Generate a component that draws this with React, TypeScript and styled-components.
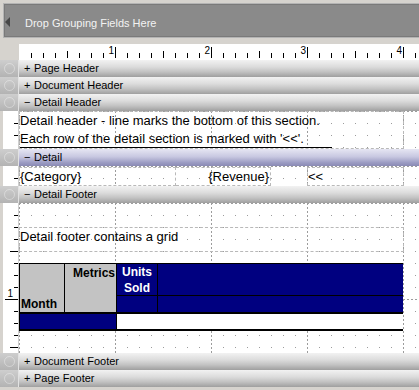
import React from "react"
import styled, { createGlobalStyle } from "styled-components"

const PAGE_GREY = "#d6d3ce"
const FONT = `"Liberation Sans", Arial, sans-serif`

const GlobalStyle = createGlobalStyle`
	html, body {
		margin: 0;
		padding: 0;
		background: ${PAGE_GREY};
	}
	body {
		font-family: ${FONT};
	}
`

type Tone = "grey" | "blue"

const BANDS: Record<Tone, string> = {
	grey: "linear-gradient(#f2f2f2, #dcdcdc 40%, #c2c2c2 70%, #9f9f9f)",
	blue: "linear-gradient(#e6e6f3, #c8c8e1 45%, #9c9cc3 80%, #8a8ab4)",
}

// horizontal ruler, 12px per 1/8 inch
const TopRuler = () => {
	const ticks = []
	for (let k = 1; k <= 33; k++) {
		const x = k * 12 + 0.5
		const top = k % 8 === 0 ? 3 : k % 4 === 0 ? 7 : 9
		ticks.push(<line key={k} x1={x} x2={x} y1={top} y2={14} stroke="#000" />)
		if (k % 8 === 0) {
			ticks.push(
				<text key={"n" + k} x={k * 12 - 1} y={10} fontSize={10} textAnchor="end" fontFamily={FONT}>
					{k / 8}
				</text>
			)
		}
	}
	return (
		<RulerStrip width={400} height={16} shapeRendering="crispEdges">
			{ticks}
		</RulerStrip>
	)
}

const SideRuler = ({ height }: { height: number }) => {
	const ticks = []
	for (let k = 1; k * 12 < height - 2; k++) {
		const y = k * 12 + 0.5
		const left = k % 8 === 0 ? 2 : k % 4 === 0 ? 7 : 11
		ticks.push(<line key={k} x1={left} x2={15} y1={y} y2={y} stroke="#000" />)
		if (k % 8 === 0) {
			ticks.push(
				<text key={"n" + k} x={10} y={y - 3} fontSize={10} textAnchor="end" fontFamily={FONT}>
					{k / 8}
				</text>
			)
		}
	}
	return (
		<VRuler width={15} height={height} shapeRendering="crispEdges">
			{ticks}
		</VRuler>
	)
}

const SectionBand = ({ label, open, tone = "grey" }: { label: string; open?: boolean; tone?: Tone }) => (
	<Band>
		<BandCap />
		<BandBar $tone={tone}>
			<Toggle>{open ? "−" : "+"}</Toggle>
			{label}
		</BandBar>
	</Band>
)

const App = () => {
	return (
		<Designer>
			<GlobalStyle />
			<GroupPanel>
				<GroupBox>
					<CollapseArrow />
					<GroupText>Drop Grouping Fields Here</GroupText>
				</GroupBox>
			</GroupPanel>

			<RulerRow>
				<TopRuler />
			</RulerRow>

			<SectionBand label="Page Header" />
			<SectionBand label="Document Header" />
			<SectionBand label="Detail Header" open />

			<Section $h={38}>
				<SideRuler height={38} />
				<Surface>
					<Field $w={385} $h={38}>
						<Line $lh={18}>Detail header - line marks the bottom of this section.</Line>
						<Line $lh={17}>Each row of the detail section is marked with '&lt;&lt;'.</Line>
						<Rule />
					</Field>
				</Surface>
			</Section>

			<SectionBand label="Detail" open tone="blue" />

			<Section $h={20}>
				<SideRuler height={20} />
				<Surface>
					<FieldRow>
						<Field $w={157} $h={19}>
							<Line $lh={17}>{"{Category}"}</Line>
						</Field>
						<Field $w={95} $h={19} $align="right" $noLeft>
							<Line $lh={17}>{"{Revenue}"}</Line>
						</Field>
						<Spacer />
						<Field $w={97} $h={19}>
							<Line $lh={17}>&lt;&lt;</Line>
						</Field>
					</FieldRow>
				</Surface>
			</Section>

			<SectionBand label="Detail Footer" open />

			<Section $h={150}>
				<SideRuler height={150} />
				<Surface>
					<FooterBody>
						<Field $w={385} $h={25}>
							<Line $lh={18}>Detail footer contains a grid</Line>
						</Field>
						<Grid>
							<HeadCell $span $bottom>
								Month
							</HeadCell>
							<HeadCell $span $right>
								Metrics
							</HeadCell>
							<BlueCell $center>
								Units
								<br />
								Sold
							</BlueCell>
							<BlueCell />
							<BlueCell />
							<BlueCell />
							<TotalCell $blue />
							<TotalCell />
						</Grid>
					</FooterBody>
				</Surface>
			</Section>

			<SectionBand label="Document Footer" />
			<SectionBand label="Page Footer" />
		</Designer>
	)
}

export default App

const Designer = styled.div`
	width: 419px;
	height: 390px;
	overflow: hidden;
	background: ${PAGE_GREY};
	font-family: ${FONT};
	color: #000;
`

const GroupPanel = styled.div`
	padding: 3px 0 6px 3px;
`

const GroupBox = styled.div`
	box-sizing: border-box;
	height: 35px;
	display: flex;
	align-items: center;
	padding: 3px 0 0 1px;
	background: #8a8a8a;
	border: 1px solid #b4b4b4;
	border-right: none;
	box-shadow: inset 1px 1px 0 #7a7a7a, inset 0 -1px 0 #7a7a7a;
	color: #f3f3f3;
	font-size: 11px;
`

const CollapseArrow = styled.span`
	width: 0;
	height: 0;
	border-top: 5px solid transparent;
	border-bottom: 5px solid transparent;
	border-right: 5px solid #474747;
	margin-right: 15px;
`

const GroupText = styled.span`
	padding-top: 2px;
`

const RulerRow = styled.div`
	height: 16px;
	padding-left: 19px;
`

const RulerStrip = styled.svg`
	display: block;
	background: #fff;
`

const Band = styled.div`
	display: flex;
	height: 17px;
	font-size: 11px;
	line-height: 17px;
`

const BandCap = styled.div`
	position: relative;
	width: 18px;
	border-right: 1px solid #e2e2e2;
	background: linear-gradient(#cecece, #b3b3b3);

	&::after {
		content: "";
		position: absolute;
		left: 4px;
		top: 3px;
		width: 9px;
		height: 9px;
		border-radius: 50%;
		border: 1px solid rgba(255, 255, 255, 0.35);
	}
`

const BandBar = styled.div<{ $tone: Tone }>`
	flex: 1;
	display: flex;
	align-items: center;
	padding-left: 5px;
	background: ${({ $tone }) => BANDS[$tone]};
`

const Toggle = styled.span`
	width: 10px;
	font-size: 11px;
`

const Section = styled.div<{ $h: number }>`
	display: flex;
	height: ${({ $h }) => $h}px;
`

const VRuler = styled.svg`
	display: block;
	flex: none;
	background: #fff;
	border-left: 3px solid ${PAGE_GREY};
	border-right: 1px solid #cfcfcf;
`

// dotted 1/8" grid with dashed inch lines
const Surface = styled.div`
	flex: 1;
	min-width: 0;
	background-color: #fff;
	background-image: linear-gradient(#fff 2px, transparent 2px),
		linear-gradient(90deg, #fff 2px, transparent 2px),
		linear-gradient(90deg, transparent 95px, #9c9c9c 95px),
		linear-gradient(transparent 95px, #9c9c9c 95px),
		linear-gradient(90deg, #fff 11px, transparent 11px),
		linear-gradient(#fff 11px, #9c9c9c 11px);
	background-size: 100% 4px, 4px 100%, 96px 100%, 100% 96px, 12px 12px, 12px 12px;
	background-position: 0 2px, 2px 0, 1px 0, 0 1px, 1px 1px, 1px 1px;
`

const Field = styled.div<{ $w: number; $h: number; $align?: "left" | "right"; $noLeft?: boolean }>`
	box-sizing: border-box;
	width: ${({ $w }) => $w}px;
	height: ${({ $h }) => $h}px;
	border: 1px dashed #b9b9b9;
	border-left-style: ${({ $noLeft }) => ($noLeft ? "none" : "dashed")};
	text-align: ${({ $align }) => $align || "left"};
	padding-right: ${({ $align }) => ($align === "right" ? "1px" : "0")};
	font-size: 13px;
	white-space: nowrap;
	flex: none;
`

const Line = styled.div<{ $lh: number }>`
	line-height: ${({ $lh }) => $lh}px;
	height: ${({ $lh }) => $lh}px;
`

const Rule = styled.div`
	width: 312px;
	height: 1px;
	background: #000;
`

const FieldRow = styled.div`
	display: flex;
	padding-top: 1px;
`

const Spacer = styled.div`
	width: 36px;
	flex: none;
`

const FooterBody = styled.div`
	padding-top: 24px;
	display: flex;
	flex-direction: column;
	gap: 11px;
`

const Grid = styled.div`
	box-sizing: border-box;
	width: 384px;
	display: grid;
	grid-template-columns: 44px 51px 40px 1fr;
	grid-template-rows: 31px 16px 16px;
	gap: 1px;
	padding: 1px 0 2px 1px;
	background: #000;
	font-size: 12px;
	font-weight: bold;
	line-height: 14px;
`

const HeadCell = styled.div<{ $span?: boolean; $bottom?: boolean; $right?: boolean }>`
	grid-row: ${({ $span }) => ($span ? "1 / 3" : "auto")};
	display: flex;
	flex-direction: column;
	justify-content: ${({ $bottom }) => ($bottom ? "flex-end" : "flex-start")};
	text-align: ${({ $right }) => ($right ? "right" : "left")};
	padding: ${({ $bottom }) => ($bottom ? "0 0 1px 1px" : "2px 1px 0 0")};
	background: #c3c3c3;
	color: #000;
`

const BlueCell = styled.div<{ $center?: boolean }>`
	background: #000080;
	color: #fff;
	text-align: ${({ $center }) => ($center ? "center" : "left")};
	line-height: 16px;
`

const TotalCell = styled.div<{ $blue?: boolean }>`
	grid-column: ${({ $blue }) => ($blue ? "1 / 3" : "3 / 5")};
	border-top: 1px solid #000;
	background: ${({ $blue }) => ($blue ? "#000080" : "#fff")};
`
